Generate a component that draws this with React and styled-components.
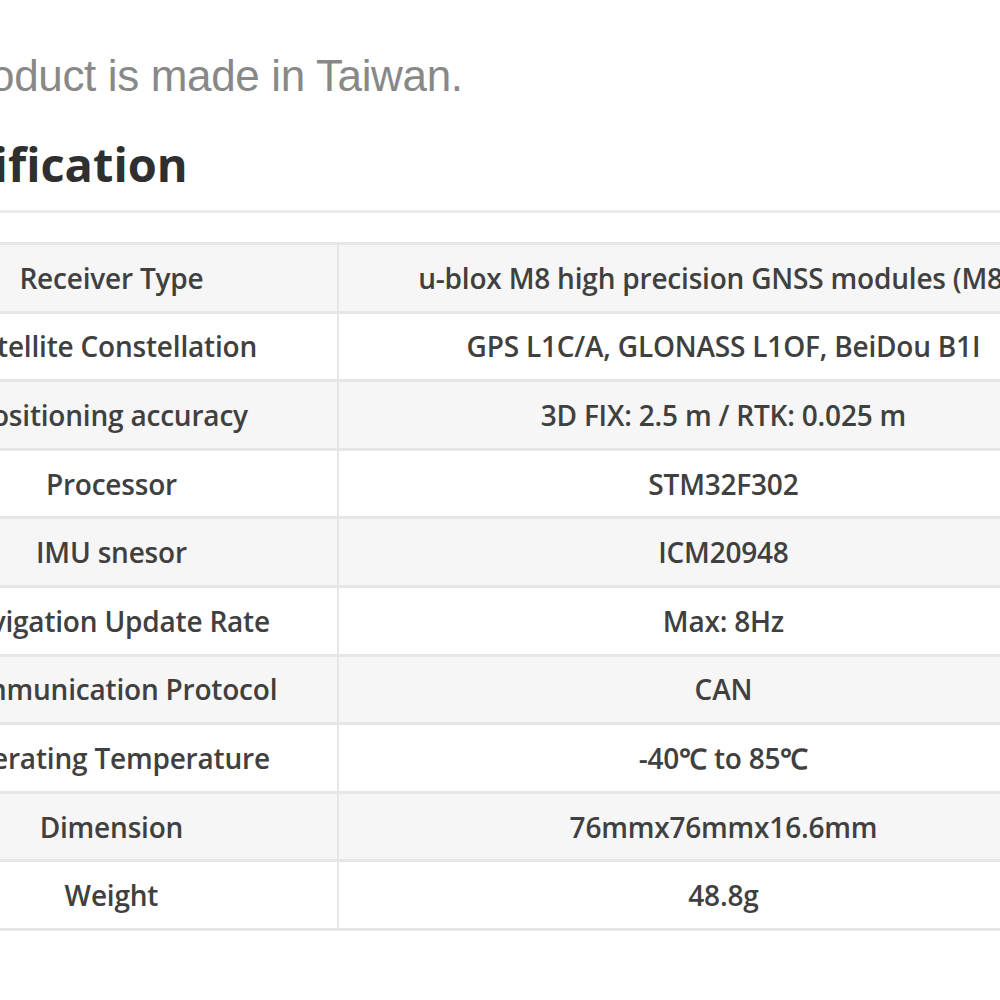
import React from "react";
import styled, { createGlobalStyle } from "styled-components";

const Global = createGlobalStyle`
  html, body { margin: 0; padding: 0; background: #ffffff; overflow: hidden; }
  body { width: 1000px; height: 1000px; }
`;

const Page = styled.div`
  width: 1230px;
  margin-left: -114px;
  padding-top: 52px;
`;

const Intro = styled.p`
  margin: 0 0 0 -28px;
  font-family: "Liberation Sans", Arial, sans-serif;
  font-size: 44px;
  line-height: 48px;
  color: #888888;
  letter-spacing: -0.35px;
`;

const Heading = styled.h2`
  margin: 34px 0 0 0;
  padding-bottom: 16px;
  font-family: "Open Sans", sans-serif;
  font-weight: 700;
  font-size: 47px;
  line-height: 60px;
  color: #2f2f2f;
  border-bottom: 3px solid #ececec;
`;

const SpecTable = styled.table`
  margin: 29px 0 0 -2px;
  width: 1226px;
  border-collapse: collapse;
  font-family: "Open Sans", sans-serif;
  font-weight: 600;
  font-size: 28px;
  color: #404040;
  letter-spacing: -0.2px;
`;

const Row = styled.tr`
  height: 68.6px;
  background: ${(p) => (p.$shade ? "#f6f6f6" : "#ffffff")};
`;

const Cell = styled.td`
  width: ${(p) => p.$w}px;
  padding: 0 10px;
  text-align: center;
  vertical-align: middle;
  white-space: nowrap;
  border: 3px solid #e6e6e6;
  border-left-width: 2px;
  border-right-width: 2px;
`;

const rows = [
  ["Receiver Type", "u-blox M8 high precision GNSS modules (M8P)"],
  ["Satellite Constellation", "GPS L1C/A, GLONASS L1OF, BeiDou B1I"],
  ["Positioning accuracy", "3D FIX: 2.5 m / RTK: 0.025 m"],
  ["Processor", "STM32F302"],
  ["IMU snesor", "ICM20948"],
  ["Navigation Update Rate", "Max: 8Hz"],
  ["Communication Protocol", "CAN"],
  ["Operating Temperature", "-40℃ to 85℃"],
  ["Dimension", "76mmx76mmx16.6mm"],
  ["Weight", "48.8g"],
];

export default function App() {
  return (
    <>
      <Global />
      <Page>
        <Intro>This product is made in Taiwan.</Intro>
        <Heading>Specification</Heading>
        <SpecTable>
          <tbody>
            {rows.map(([k, v], i) => (
              <Row key={k} $shade={i % 2 === 0}>
                <Cell $w={450}>{k}</Cell>
                <Cell $w={776}>{v}</Cell>
              </Row>
            ))}
          </tbody>
        </SpecTable>
      </Page>
    </>
  );
}
